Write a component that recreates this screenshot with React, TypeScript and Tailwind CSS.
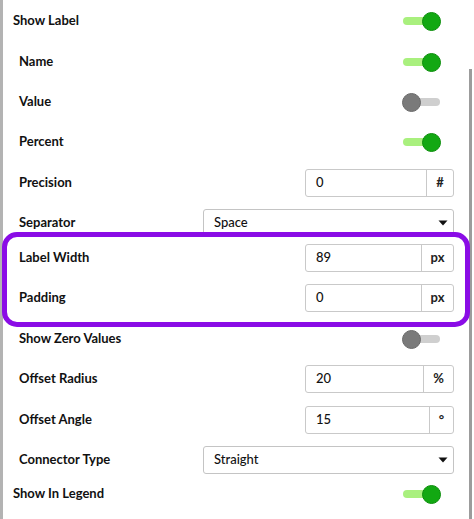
import React from "react";

function Toggle({ on }: { on: boolean }) {
  return (
    <div className="relative w-[39px] h-[19px] mr-[13px] shrink-0">
      <div
        className={
          "absolute left-[1px] top-[5.5px] w-[37px] h-[8px] rounded-full " +
          (on ? "bg-[#a9f07e]" : "bg-[#cfcfcf]")
        }
      />
      <div
        className={
          "absolute top-0 w-[19px] h-[19px] rounded-full border " +
          (on ? "right-0 bg-[#12a812] border-[#0b8e0b]" : "left-0 bg-[#7a7a7a] border-[#6a6a6a]")
        }
      />
    </div>
  );
}

function NumInput({ value, suffix, sw }: { value: string; suffix: string; sw: string }) {
  return (
    <div className="flex w-[149px] h-[28px] border border-[#c9c9c9] rounded-[3px] bg-white">
      <div className="flex-1 flex items-center pl-[10px] text-[13px] font-medium text-[#111]">{value}</div>
      <div className={"flex items-center justify-center border-l border-[#c9c9c9] text-[13px] font-bold text-[#222] " + sw}>
        {suffix}
      </div>
    </div>
  );
}

function Select({ value }: { value: string }) {
  return (
    <div className="flex items-center justify-between w-[251px] h-[28px] border border-[#c4c4c4] rounded-[3px] bg-white pl-[10px] pr-[5px]">
      <span className="text-[13px] font-medium text-[#111]">{value}</span>
      <svg width="10" height="6" viewBox="0 0 10 6">
        <path d="M0.5 0.5 L9.5 0.5 L5 5.5 Z" fill="#111" />
      </svg>
    </div>
  );
}

function Row({
  label,
  indent,
  mt,
  children,
}: {
  label: string;
  indent: boolean;
  mt: string;
  children: React.ReactNode;
}) {
  return (
    <div className={"flex items-center justify-between h-[28px] pr-[20px] " + mt + (indent ? " pl-[19px]" : " pl-[13px]")}>
      <span className="text-[13px] font-bold text-[#111]">{label}</span>
      {children}
    </div>
  );
}

export default function App() {
  return (
    <div
      className="relative w-[474px] h-[519px] bg-white overflow-hidden"
      style={{ fontFamily: "Lato, 'Open Sans', sans-serif" }}
    >
      <div className="absolute left-0 top-0 w-[3px] h-full bg-[#b3b3b3]" />
      <div className="absolute left-[469px] top-[69px] w-[3px] bottom-0 bg-[#9c9c9c]" />
      <div className="flex flex-col pt-[7px]">
        <Row label="Show Label" indent={false} mt="">
          <Toggle on={true} />
        </Row>
        <Row label="Name" indent mt="mt-[13px]">
          <Toggle on={true} />
        </Row>
        <Row label="Value" indent mt="mt-[12px]">
          <Toggle on={false} />
        </Row>
        <Row label="Percent" indent mt="mt-[12px]">
          <Toggle on={true} />
        </Row>
        <Row label="Precision" indent mt="mt-[13px]">
          <NumInput value="0" suffix="#" sw="w-[27px]" />
        </Row>
        <Row label="Separator" indent mt="mt-[12px]">
          <Select value="Space" />
        </Row>
        <Row label="Label Width" indent mt="mt-[7px]">
          <NumInput value="89" suffix="px" sw="w-[32px]" />
        </Row>
        <Row label="Padding" indent mt="mt-[12px]">
          <NumInput value="0" suffix="px" sw="w-[32px]" />
        </Row>
        <Row label="Show Zero Values" indent mt="mt-[13px]">
          <Toggle on={false} />
        </Row>
        <Row label="Offset Radius" indent mt="mt-[12px]">
          <NumInput value="20" suffix="%" sw="w-[30px]" />
        </Row>
        <Row label="Offset Angle" indent mt="mt-[13px]">
          <NumInput value="15" suffix="°" sw="w-[24px]" />
        </Row>
        <Row label="Connector Type" indent mt="mt-[12px]">
          <Select value="Straight" />
        </Row>
        <Row label="Show In Legend" indent={false} mt="mt-[6px]">
          <Toggle on={true} />
        </Row>
      </div>
      <div className="absolute left-[2px] top-[232px] w-[468px] h-[95px] border-[5px] border-[#8a0ce6] rounded-[15px] pointer-events-none" />
    </div>
  );
}
